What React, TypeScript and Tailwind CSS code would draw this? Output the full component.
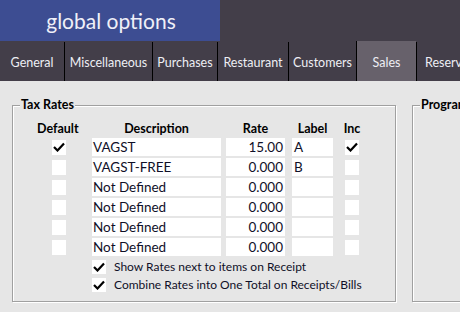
import React from "react";

const font = { fontFamily: 'Lato, "Noto Sans", Arial, sans-serif' };

const tabs = [
    { name: "General", w: "w-[64px]" },
    { name: "Miscellaneous", w: "w-[88px]" },
    { name: "Purchases", w: "w-[65px]" },
    { name: "Restaurant", w: "w-[71px]" },
    { name: "Customers", w: "w-[68px]" },
    { name: "Sales", w: "w-[60px]", active: true },
    { name: "Reservations", w: "w-[80px]" },
];

const rates = [
    { desc: "VAGST", rate: "15.00", label: "A", def: true, inc: true },
    { desc: "VAGST-FREE", rate: "0.000", label: "B" },
    { desc: "Not Defined", rate: "0.000", label: "" },
    { desc: "Not Defined", rate: "0.000", label: "" },
    { desc: "Not Defined", rate: "0.000", label: "" },
    { desc: "Not Defined", rate: "0.000", label: "" },
];

const Check = ({ on, className }: { on?: boolean; className: string }) => (
    <div className={`bg-white flex items-center justify-center shrink-0 ${className}`}>
        {on && (
            <svg width="12" height="10" viewBox="0 0 12 10">
                <path d="M1 5 L4.5 8.5 L11 1.5" fill="none" stroke="#000" strokeWidth="2.2" />
            </svg>
        )}
    </div>
);

export default function App() {
    return (
        <div className="w-[460px] h-[312px] overflow-hidden bg-[#e6e6e6] flex flex-col" style={font}>
            {/* title bar */}
            <div className="h-[41px] bg-[#433e49] flex shrink-0">
                <div className="w-[220px] bg-[#3d4d92] flex items-center justify-center text-[21px] text-[#f0f0f8] pt-[1px] pl-[2px]">
                    global options
                </div>
            </div>

            {/* tabs */}
            <div className="h-[40px] bg-[#433e49] flex shrink-0">
                {tabs.map((t, i) => (
                    <div
                        key={t.name}
                        className={`${t.w} shrink-0 flex items-center justify-center text-[12.5px] text-[#eeeef4] whitespace-nowrap overflow-hidden ${
                            t.active ? "bg-[#67616b] pt-[4px]" : "mt-[1px] h-[39px] pt-[3px]"
                        } ${i > 0 ? "border-l border-black" : ""} ${i === tabs.length - 1 ? "justify-start pl-[8px]" : ""}`}
                    >
                        {t.name}
                    </div>
                ))}
            </div>

            {/* content */}
            <div className="flex pl-[12px] pt-[24px] gap-[16px]">
                <div className="relative w-[384px] h-[197px] shrink-0 border border-[#a0a0a0] shadow-[1px_1px_0_#fff,inset_1px_1px_0_#fff]">
                    <div className="absolute left-[7px] top-[-10px] px-[1px] bg-[#e6e6e6] text-[12.5px] font-bold text-black leading-[18px]">
                        Tax Rates
                    </div>

                    <div className="pt-[15px] text-[12.5px]">
                        <div className="flex h-[16px] leading-[16px] font-bold text-black">
                            <div className="ml-[24px] w-[40px] text-center">Default</div>
                            <div className="ml-[15px] w-[129px] text-center">Description</div>
                            <div className="ml-[5px] w-[59px] text-center">Rate</div>
                            <div className="ml-[7px] w-[41px] text-center">Label</div>
                            <div className="ml-[12px] w-[14px] flex justify-center">Inc</div>
                        </div>

                        <div className="mt-[1px] flex flex-col gap-[2px] text-[13.5px] text-[#101028]">
                            {rates.map((r, i) => (
                                <div key={i} className="flex h-[18px] items-center">
                                    <Check on={r.def} className="ml-[39px] w-[14px] h-[15px]" />
                                    <div className="ml-[26px] w-[129px] h-[18px] bg-white px-[1px] leading-[18px]">{r.desc}</div>
                                    <div className="ml-[5px] w-[59px] h-[18px] bg-white px-[2px] leading-[18px] text-right">{r.rate}</div>
                                    <div className="ml-[7px] w-[41px] h-[18px] bg-white px-[2px] leading-[18px]">{r.label}</div>
                                    <Check on={r.inc} className="ml-[12px] w-[14px] h-[15px]" />
                                </div>
                            ))}
                        </div>

                        <div className="mt-[4px] ml-[79px] flex flex-col gap-[4px] text-[12px] text-[#101028]">
                            <div className="flex items-center gap-[8px] h-[14px]">
                                <Check on className="w-[14px] h-[14px]" />
                                <span>Show Rates next to items on Receipt</span>
                            </div>
                            <div className="flex items-center gap-[8px] h-[14px]">
                                <Check on className="w-[14px] h-[14px]" />
                                <span>Combine Rates into One Total on Receipts/Bills</span>
                            </div>
                        </div>
                    </div>
                </div>

                <div className="relative w-[100px] h-[197px] shrink-0 border border-[#a0a0a0] shadow-[1px_1px_0_#fff,inset_1px_1px_0_#fff]">
                    <div className="absolute left-[7px] top-[-10px] px-[1px] bg-[#e6e6e6] text-[12.5px] font-bold text-black leading-[18px] whitespace-nowrap">
                        Program
                    </div>
                </div>
            </div>
        </div>
    );
}
